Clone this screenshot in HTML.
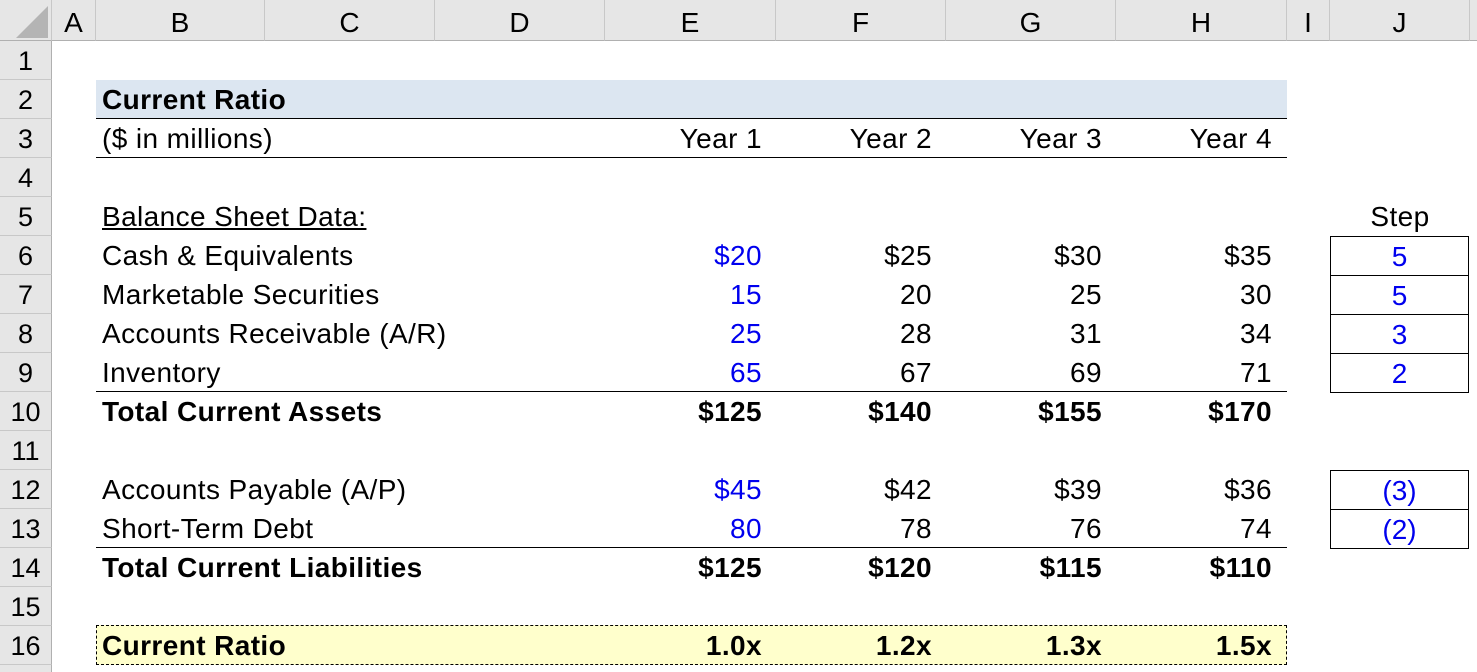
<!DOCTYPE html>
<html style="overflow:hidden;height:672px"><head><style>
html,body{margin:0;width:1477px;height:672px;overflow:hidden}
body{background:#fff;font-family:"Liberation Sans",Arial,sans-serif;position:relative}
div{position:absolute;box-sizing:border-box}
.ch{top:0;height:41px;background:#e6e6e6;border-right:1px solid #c8c8c8;border-bottom:1px solid #b0b0b0;font-size:28px;text-align:center;line-height:46px;color:#000}
.rh{left:0;width:52px;height:39px;background:#e6e6e6;border-bottom:1px solid #c8c8c8;border-right:1px solid #b0b0b0;font-size:27px;text-align:center;line-height:41px}
.t{font-size:28px;letter-spacing:0.4px;line-height:40px;height:39px;white-space:nowrap}
.r{text-align:right}
.b{font-weight:bold}
.bl{color:#0000ee}
.box{left:1330px;width:139px;height:40px;border:1px solid #000;text-align:center;font-size:28px;line-height:40px;color:#0000ee}
</style></head><body>
<div class="ch" style="left:0;width:52px"><svg width="52" height="40" style="position:absolute;left:0;top:0"><polygon points="48,6 48,38 16,38" fill="#b4b4b4"/></svg></div>
<div class="ch" style="left:52px;width:44px">A</div>
<div class="ch" style="left:96px;width:169px">B</div>
<div class="ch" style="left:265px;width:170px">C</div>
<div class="ch" style="left:435px;width:170px">D</div>
<div class="ch" style="left:605px;width:171px">E</div>
<div class="ch" style="left:776px;width:170px">F</div>
<div class="ch" style="left:946px;width:170px">G</div>
<div class="ch" style="left:1116px;width:171px">H</div>
<div class="ch" style="left:1287px;width:43px">I</div>
<div class="ch" style="left:1330px;width:140px">J</div>
<div class="ch" style="left:1470px;width:7px;border-right:none"></div>

<div class="rh" style="top:41px">1</div>
<div class="rh" style="top:80px">2</div>
<div class="rh" style="top:119px">3</div>
<div class="rh" style="top:158px">4</div>
<div class="rh" style="top:197px">5</div>
<div class="rh" style="top:236px">6</div>
<div class="rh" style="top:275px">7</div>
<div class="rh" style="top:314px">8</div>
<div class="rh" style="top:353px">9</div>
<div class="rh" style="top:392px">10</div>
<div class="rh" style="top:431px">11</div>
<div class="rh" style="top:470px">12</div>
<div class="rh" style="top:509px">13</div>
<div class="rh" style="top:548px">14</div>
<div class="rh" style="top:587px">15</div>
<div class="rh" style="top:626px">16</div>
<div class="rh" style="top:665px;height:7px;border-bottom:none"></div>

<div style="left:96px;top:80px;width:1191px;height:39px;background:#dce6f1;border-bottom:1.5px solid #000"></div>
<div class="t b" style="left:102px;top:80px">Current Ratio</div>
<div style="left:96px;top:157px;width:1191px;height:1px;background:#000"></div>
<div class="t" style="left:102px;top:119px">($ in millions)</div>
<div class="t r" style="left:605px;width:157px;top:119px">Year 1</div>
<div class="t r" style="left:776px;width:156px;top:119px">Year 2</div>
<div class="t r" style="left:946px;width:156px;top:119px">Year 3</div>
<div class="t r" style="left:1116px;width:156px;top:119px">Year 4</div>

<div class="t" style="left:102px;top:197px;text-decoration:underline">Balance Sheet Data:</div>
<div class="t" style="left:1330px;width:140px;top:197px;text-align:center">Step</div>

<div class="t" style="left:102px;top:236px">Cash &amp; Equivalents</div>
<div class="t r bl" style="left:605px;width:157px;top:236px">$20</div>
<div class="t r" style="left:776px;width:156px;top:236px">$25</div>
<div class="t r" style="left:946px;width:156px;top:236px">$30</div>
<div class="t r" style="left:1116px;width:156px;top:236px">$35</div>
<div class="box" style="top:236px">5</div>

<div class="t" style="left:102px;top:275px">Marketable Securities</div>
<div class="t r bl" style="left:605px;width:157px;top:275px">15</div>
<div class="t r" style="left:776px;width:156px;top:275px">20</div>
<div class="t r" style="left:946px;width:156px;top:275px">25</div>
<div class="t r" style="left:1116px;width:156px;top:275px">30</div>
<div class="box" style="top:275px">5</div>

<div class="t" style="left:102px;top:314px">Accounts Receivable (A/R)</div>
<div class="t r bl" style="left:605px;width:157px;top:314px">25</div>
<div class="t r" style="left:776px;width:156px;top:314px">28</div>
<div class="t r" style="left:946px;width:156px;top:314px">31</div>
<div class="t r" style="left:1116px;width:156px;top:314px">34</div>
<div class="box" style="top:314px">3</div>

<div class="t" style="left:102px;top:353px">Inventory</div>
<div class="t r bl" style="left:605px;width:157px;top:353px">65</div>
<div class="t r" style="left:776px;width:156px;top:353px">67</div>
<div class="t r" style="left:946px;width:156px;top:353px">69</div>
<div class="t r" style="left:1116px;width:156px;top:353px">71</div>
<div class="box" style="top:353px">2</div>
<div style="left:96px;top:391px;width:1191px;height:1px;background:#000"></div>

<div class="t b" style="left:102px;top:392px">Total Current Assets</div>
<div class="t r b" style="left:605px;width:157px;top:392px">$125</div>
<div class="t r b" style="left:776px;width:156px;top:392px">$140</div>
<div class="t r b" style="left:946px;width:156px;top:392px">$155</div>
<div class="t r b" style="left:1116px;width:156px;top:392px">$170</div>

<div class="t" style="left:102px;top:470px">Accounts Payable (A/P)</div>
<div class="t r bl" style="left:605px;width:157px;top:470px">$45</div>
<div class="t r" style="left:776px;width:156px;top:470px">$42</div>
<div class="t r" style="left:946px;width:156px;top:470px">$39</div>
<div class="t r" style="left:1116px;width:156px;top:470px">$36</div>
<div class="box" style="top:470px">(3)</div>

<div class="t" style="left:102px;top:509px">Short-Term Debt</div>
<div class="t r bl" style="left:605px;width:157px;top:509px">80</div>
<div class="t r" style="left:776px;width:156px;top:509px">78</div>
<div class="t r" style="left:946px;width:156px;top:509px">76</div>
<div class="t r" style="left:1116px;width:156px;top:509px">74</div>
<div class="box" style="top:509px">(2)</div>
<div style="left:96px;top:547px;width:1191px;height:1px;background:#000"></div>

<div class="t b" style="left:102px;top:548px">Total Current Liabilities</div>
<div class="t r b" style="left:605px;width:157px;top:548px">$125</div>
<div class="t r b" style="left:776px;width:156px;top:548px">$120</div>
<div class="t r b" style="left:946px;width:156px;top:548px">$115</div>
<div class="t r b" style="left:1116px;width:156px;top:548px">$110</div>

<div style="left:96px;top:625px;width:1191px;height:40px;background:#ffffcc;border:1px dashed #000"></div>
<div class="t b" style="left:102px;top:626px">Current Ratio</div>
<div class="t r b" style="left:605px;width:157px;top:626px">1.0x</div>
<div class="t r b" style="left:776px;width:156px;top:626px">1.2x</div>
<div class="t r b" style="left:946px;width:156px;top:626px">1.3x</div>
<div class="t r b" style="left:1116px;width:156px;top:626px">1.5x</div>
</body></html>
